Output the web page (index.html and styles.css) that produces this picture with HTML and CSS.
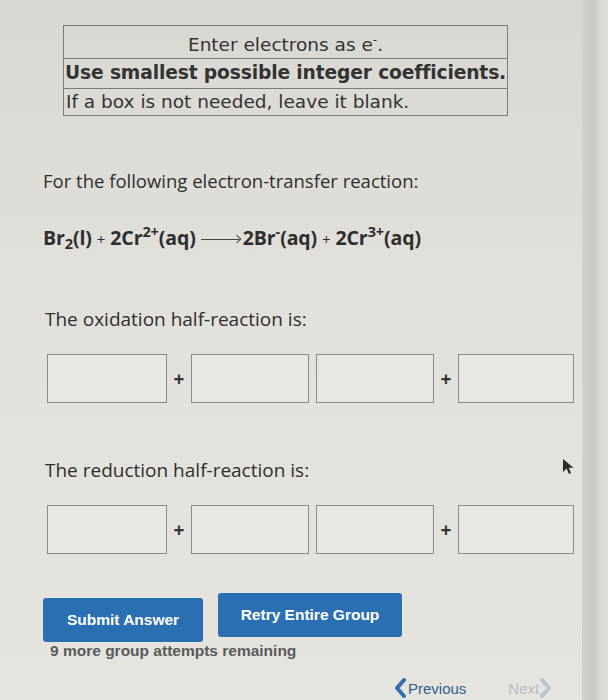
FILE: index.html
```html
<!DOCTYPE html>
<html>
<head>
<meta charset="utf-8">
<link rel="stylesheet" href="styles.css">
</head>
<body>
<div class="screen">
  <div class="page">
    <div class="notes">
      <div class="row r1 center">Enter electrons as e<sup>-</sup>.</div>
      <div class="row r2 bold">Use smallest possible integer coefficients.</div>
      <div class="row r3">If a box is not needed, leave it blank.</div>
    </div>

    <p class="intro">For the following electron-transfer reaction:</p>
    <p class="equation">Br<sub>2</sub>(l) <span class="plus">+</span> 2Cr<sup>2+</sup>(aq)<span class="arrow"></span>2Br<sup>-</sup>(aq) <span class="plus">+</span> 2Cr<sup>3+</sup>(aq)</p>

    <p class="label ox">The oxidation half-reaction is:</p>
    <div class="boxes">
      <div class="box b1"></div><span class="op">+</span><div class="box b2"></div><div class="box b3"></div><span class="op">+</span><div class="box b4"></div>
    </div>

    <p class="label red">The reduction half-reaction is:</p>
    <div class="boxes">
      <div class="box b1"></div><span class="op">+</span><div class="box b2"></div><div class="box b3"></div><span class="op">+</span><div class="box b4"></div>
    </div>

    <div class="actions">
      <button class="btn submit">Submit Answer</button>
      <button class="btn retry">Retry Entire Group</button>
    </div>
    <p class="attempts">9 more group attempts remaining</p>

    <div class="nav">
      <span class="prev"><svg class="chev" width="12" height="20" viewBox="0 0 12 20"><path d="M10 2 L3 10 L10 18" fill="none" stroke="#2f6fae" stroke-width="4" stroke-linecap="round" stroke-linejoin="round"/></svg>Previous</span>
      <span class="next">Next<svg class="chev" width="12" height="20" viewBox="0 0 12 20"><path d="M2 2 L9 10 L2 18" fill="none" stroke="#b7c5d3" stroke-width="4" stroke-linecap="round" stroke-linejoin="round"/></svg></span>
    </div>
  </div>
  <div class="edge"></div>
  <svg class="cursor" width="14" height="18" viewBox="0 0 14 18"><path d="M1 1 L1 14 L4.5 10.5 L7 16 L9 15 L6.8 9.8 L11.5 9.8 Z" fill="#2a2a2a"/></svg>
</div>
</body>
</html>
```

FILE: styles.css
```css
html, body {
  margin: 0;
  padding: 0;
}
body {
  width: 608px;
  height: 700px;
  overflow: hidden;
  background: linear-gradient(180deg, #d9d7d1 0%, #e2e0db 40%, #e6e4df 100%);
  font-family: "Open Sans", "DejaVu Sans", sans-serif;
  color: #2b2b2b;
}
.screen {
  position: relative;
  display: flex;
  height: 700px;
}
.page {
  flex: 0 0 582px;
  padding: 25px 0 0 0;
  box-sizing: border-box;
}
.edge {
  flex: 1;
  background: linear-gradient(90deg, #d3d1cc 0%, #cac8c3 50%, #dad8d3 70%, #e0ded9 100%);
}
.notes {
  margin-left: 63px;
  width: 445px;
  border: 1.5px solid #7a7a7a;
  box-sizing: border-box;
  font-family: "DejaVu Sans", Verdana, sans-serif;
  font-size: 18.5px;
  color: #333;
}
.row {
  padding: 0 2px;
  white-space: nowrap;
  box-sizing: border-box;
}
.row + .row {
  border-top: 1.5px solid #7a7a7a;
}
.r1 {
  height: 32px;
  line-height: 26px;
  padding-top: 6px;
}
.r2 {
  height: 30px;
  line-height: 28px;
}
.r3 {
  height: 27px;
  line-height: 25px;
}
.center { text-align: center; }
.bold { font-weight: bold; font-size: 18.7px; letter-spacing: -0.15px; padding-left: 1px; }
.notes sup {
  font-size: 12px;
  line-height: 0;
  vertical-align: 7px;
}
.intro {
  margin: 52px 0 0 43px;
  font-size: 18.5px;
  line-height: 26px;
  color: #2e2e2e;
}
.equation {
  margin: 31px 0 0 43px;
  font-size: 19.5px;
  font-weight: bold;
  line-height: 26px;
  color: #2e2e2e;
  white-space: nowrap;
  letter-spacing: -0.1px;
}
.equation sub {
  font-size: 14.5px;
  line-height: 0;
  vertical-align: -4px;
}
.equation sup {
  font-size: 14.5px;
  line-height: 0;
  vertical-align: 8px;
}
.equation .plus {
  font-weight: normal;
  font-size: 15px;
}
.arrow {
  display: inline-block;
  position: relative;
  width: 38px;
  height: 1px;
  margin: 0 4px 0 5px;
  background: #444;
  vertical-align: 5px;
}
.arrow::after {
  content: "";
  position: absolute;
  right: -1px;
  top: -3px;
  width: 5px;
  height: 5px;
  border-top: 1px solid #444;
  border-right: 1px solid #444;
  transform: rotate(45deg);
  transform-origin: center;
}
.label {
  margin: 0 0 0 45px;
  font-size: 19px;
  line-height: 26px;
  color: #2e2e2e;
}
.label.ox { margin-top: 54px; }
.label.red { margin-top: 54px; }
.boxes {
  display: flex;
  align-items: center;
  margin: 22px 0 0 47px;
}
.box {
  width: 118px;
  height: 49px;
  border: 1.5px solid #8a8a88;
  box-sizing: border-box;
  background: #e9e7e3;
}
.box.b1 { width: 120px; }
.box.b3 { margin-left: 7px; }
.box.b4 { width: 116px; }
.op {
  width: 24px;
  text-align: center;
  font-size: 19px;
  font-weight: bold;
  color: #333;
}
.actions {
  display: flex;
  align-items: flex-start;
  gap: 15px;
  margin: 39px 0 0 43px;
}
.btn {
  border: none;
  border-radius: 3px;
  background: #2b6fb3;
  color: #fff;
  font-family: "Liberation Sans", Arial, sans-serif;
  font-weight: bold;
  font-size: 15.5px;
  padding: 0;
  height: 44px;
}
.submit { width: 160px; margin-top: 5px; }
.retry { width: 184px; }
.attempts {
  margin: 0 0 0 50px;
  font-family: "Liberation Sans", Arial, sans-serif;
  font-weight: bold;
  font-size: 15.5px;
  line-height: 18px;
  color: #5a5a5a;
}
.nav {
  display: flex;
  margin: 18px 0 0 394px;
  font-family: "Liberation Sans", Arial, sans-serif;
  font-size: 15px;
  align-items: center;
}
.prev {
  display: flex;
  align-items: center;
  gap: 2px;
  color: #2f5e91;
}
.next {
  display: flex;
  align-items: center;
  gap: 1px;
  margin-left: 42px;
  color: #b6bcc4;
}
.cursor {
  position: absolute;
  left: 562px;
  top: 458px;
}
```
